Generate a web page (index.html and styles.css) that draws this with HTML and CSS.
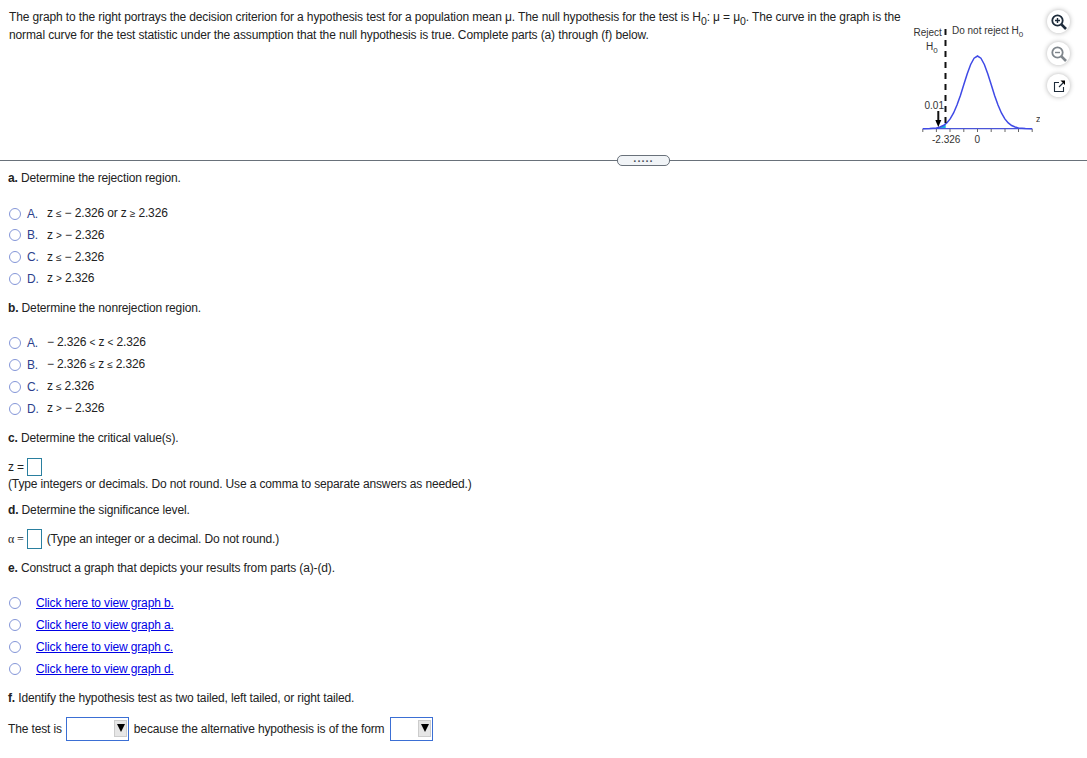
FILE: index.html
```html
<!DOCTYPE html>
<html lang="en">

<head>
    <meta charset="UTF-8">
    <meta name="viewport" content="width=device-width, initial-scale=1.0">
    <title>Hypothesis Test</title>
    <link rel="stylesheet" href="styles.css">
</head>

<body>
    <div class="top">
        <div class="intro">
            <p>The graph to the right portrays the decision criterion for a hypothesis test for a population mean μ. The null hypothesis for the test is H<sub>0</sub>: μ = μ<sub>0</sub>. The curve in the graph is the</p>
            <p>normal curve for the test statistic under the assumption that the null hypothesis is true. Complete parts (a) through (f) below.</p>
        </div>

        <svg class="graph" width="140" height="160" viewBox="0 0 140 160">
            <polygon class="tail" points="22.8,128.7 29.65,128.5 36.49,127.9 39.91,127 43.32,125.5 45.7,123.9 45.7,128.7" />
            <polyline class="axis" points="22.8,128.7 132.2,128.7" />
            <g class="ticks">
                <line x1="22.8" y1="129" x2="22.8" y2="132" />
                <line x1="36.4" y1="129" x2="36.4" y2="132" />
                <line x1="50" y1="129" x2="50" y2="132" />
                <line x1="63.8" y1="129" x2="63.8" y2="132" />
                <line x1="77.5" y1="129" x2="77.5" y2="132" />
                <line x1="91.2" y1="129" x2="91.2" y2="132" />
                <line x1="105" y1="129" x2="105" y2="132" />
                <line x1="118.5" y1="129" x2="118.5" y2="132" />
                <line x1="132.2" y1="129" x2="132.2" y2="132" />
            </g>
            <polyline class="curve" points="22.82,128.7 29.65,128.5 36.49,127.9 39.91,127 43.32,125.5 46.74,122.9 50.16,118.9 53.58,113 57,105.1 60.41,95.4 63.83,84.6 67.25,73.8 70.66,64.5 74.08,58.2 77.5,56 80.92,58.2 84.34,64.5 87.75,73.8 91.17,84.6 94.59,95.4 98,105.1 101.42,113 104.84,118.9 108.26,122.9 111.68,125.5 115.09,127 118.51,127.9 125.35,128.5 132.18,128.7" />
            <line class="cutoff" x1="45.5" y1="29" x2="45.5" y2="128" />
            <line class="arrow-line" x1="38.3" y1="111" x2="38.3" y2="122" />
            <polygon points="35.3,120 41.3,120 38.3,127" />
            <text x="13.5" y="36">Reject</text>
            <text x="52" y="34">Do not reject H<tspan class="sub" dy="3">0</tspan></text>
            <text x="26" y="50">H<tspan class="sub" dy="3">0</tspan></text>
            <text x="24.5" y="109">0.01</text>
            <text x="32" y="143">-2.326</text>
            <text x="74.5" y="143">0</text>
            <text x="136" y="122" class="small">z</text>
        </svg>

        <div class="tools">
            <button class="tool">
                <svg width="18" height="18" viewBox="0 0 18 18">
                    <circle cx="7.5" cy="7.5" r="5.2" class="lens" />
                    <line x1="11.4" y1="11.4" x2="16" y2="16" class="handle-dark" />
                    <path d="M5 7.5h5M7.5 5v5" class="lens-thin" />
                </svg>
            </button>
            <button class="tool">
                <svg width="18" height="18" viewBox="0 0 18 18">
                    <circle cx="7.5" cy="7.5" r="5.2" class="lens off" />
                    <line x1="11.4" y1="11.4" x2="16" y2="16" class="handle-dark off" />
                    <path d="M5 7.5h5" class="lens-thin off" />
                </svg>
            </button>
            <button class="tool">
                <svg width="18" height="18" viewBox="0 0 18 18">
                    <path d="M9 5.5H4.5v9h9V10" class="popout" />
                    <path d="M9 10l4-4" class="popout" />
                    <path d="M10.5 3.5h4.5v4.5z" />
                </svg>
            </button>
        </div>
    </div>

    <div class="divider">
        <div class="rule"></div>
        <div class="grip">.....</div>
        <div class="rule"></div>
    </div>

    <div class="part part-a">
        <p class="head"><b>a.</b> Determine the rejection region.</p>
        <ul class="choices">
            <li><input type="radio"><span class="letter">A.</span><span class="math">z <i>≤</i> − 2.326 or z <i>≥</i> 2.326</span></li>
            <li><input type="radio"><span class="letter">B.</span><span class="math">z <i>&gt;</i> − 2.326</span></li>
            <li><input type="radio"><span class="letter">C.</span><span class="math">z <i>≤</i> − 2.326</span></li>
            <li><input type="radio"><span class="letter">D.</span><span class="math">z <i>&gt;</i> 2.326</span></li>
        </ul>
    </div>

    <div class="part part-b">
        <p class="head"><b>b.</b> Determine the nonrejection region.</p>
        <ul class="choices wide">
            <li><input type="radio"><span class="letter">A.</span><span class="math">− 2.326 <i>&lt;</i> z <i>&lt;</i> 2.326</span></li>
            <li><input type="radio"><span class="letter">B.</span><span class="math">− 2.326 <i>≤</i> z <i>≤</i> 2.326</span></li>
            <li><input type="radio"><span class="letter">C.</span><span class="math">z <i>≤</i> 2.326</span></li>
            <li><input type="radio"><span class="letter">D.</span><span class="math">z <i>&gt;</i> − 2.326</span></li>
        </ul>
    </div>

    <div class="part part-c">
        <p class="head"><b>c.</b> Determine the critical value(s).</p>
        <div class="answer"><span>z =</span><input type="text" class="box"></div>
        <p class="hint">(Type integers or decimals. Do not round. Use a comma to separate answers as needed.)</p>
    </div>

    <div class="part part-d">
        <p class="head"><b>d.</b> Determine the significance level.</p>
        <div class="answer alpha"><span class="greek">α =</span><input type="text" class="box"><span class="after">(Type an integer or a decimal. Do not round.)</span></div>
    </div>

    <div class="part part-e">
        <p class="head"><b>e.</b> Construct a graph that depicts your results from parts (a)-(d).</p>
        <ul class="choices links">
            <li><input type="radio"><a href="#">Click here to view graph b.</a></li>
            <li><input type="radio"><a href="#">Click here to view graph a.</a></li>
            <li><input type="radio"><a href="#">Click here to view graph c.</a></li>
            <li><input type="radio"><a href="#">Click here to view graph d.</a></li>
        </ul>
    </div>

    <div class="part part-f">
        <p class="head"><b>f.</b> Identify the hypothesis test as two tailed, left tailed, or right tailed.</p>
        <div class="sentence">
            <span>The test is</span>
            <div class="select first"><span class="drop"></span></div>
            <span>because the alternative hypothesis is of the form</span>
            <div class="select second"><span class="drop"></span></div>
        </div>
    </div>
</body>

</html>
```

FILE: styles.css
```css
body {
    font-family: "Liberation Sans", Arial, sans-serif;
    font-size: 12px;
    letter-spacing: -0.14px;
    line-height: 18px;
    color: #222;
    background-color: #fff;
    margin: 0;
    padding: 0;
}

p {
    margin: 0;
}

sub {
    font-size: 10.5px;
    line-height: 0;
    vertical-align: -4px;
}

.top {
    display: flex;
    height: 155px;
}

.intro {
    width: 897px;
    margin: 8px 0 0 9px;
    flex: none;
    letter-spacing: -0.125px;
    white-space: nowrap;
}

.graph {
    flex: none;
    margin-left: -6px;
}

.graph text {
    font-family: "Liberation Sans", Arial, sans-serif;
    font-size: 10px;
    letter-spacing: 0;
    fill: #333;
}

.graph text.small {
    font-size: 9px;
}

.graph .sub {
    font-size: 8px;
}

.tail {
    fill: #19b5d8;
}

.axis {
    stroke: #4a55d8;
    stroke-width: 1.2;
    fill: none;
}

.ticks line {
    stroke: #666;
    stroke-width: 1;
}

.curve {
    stroke: #3f4ae6;
    stroke-width: 1.5;
    fill: none;
}

.cutoff {
    stroke: #111;
    stroke-width: 2;
    stroke-dasharray: 6 5;
}

.arrow-line {
    stroke: #111;
    stroke-width: 2;
}

.tools {
    display: flex;
    flex-direction: column;
    gap: 9px;
    margin: 10px 0 0 7px;
}

.tool {
    width: 23px;
    height: 23px;
    padding: 0;
    border: 0;
    border-radius: 50%;
    background: #fff;
    box-shadow: 0 0 5px rgba(0, 0, 0, 0.3);
    display: flex;
    align-items: center;
    justify-content: center;
}

.lens {
    fill: none;
    stroke: #1d2b3a;
    stroke-width: 1.8;
}

.lens-thin {
    fill: none;
    stroke: #1d2b3a;
    stroke-width: 1.4;
}

.handle-dark {
    stroke: #1d2b3a;
    stroke-width: 2.6;
}

.lens.off,
.lens-thin.off,
.handle-dark.off {
    stroke: #7f868c;
}

.popout {
    fill: none;
    stroke: #1d2b3a;
    stroke-width: 1.1;
}

.divider {
    display: flex;
    align-items: center;
    height: 11px;
}

.rule {
    flex: 1;
    height: 1px;
    background-color: #69717a;
}

.grip {
    width: 51px;
    height: 9px;
    border: 1px solid #69717a;
    border-radius: 5px;
    background-color: #f1f4f7;
    color: #4a525a;
    font-size: 11px;
    font-weight: bold;
    line-height: 4px;
    letter-spacing: 1px;
    text-align: center;
}

.divider .rule:first-child {
    flex: none;
    width: 617px;
}

.part {
    padding-left: 8px;
}

.head b {
    font-weight: bold;
}

.part-a {
    padding-top: 3px;
}

.part-b {
    padding-top: 9px;
}

.part-c {
    padding-top: 9px;
}

.part-d {
    padding-top: 8px;
}

.part-e {
    padding-top: 10px;
}

.part-f {
    padding-top: 9px;
}

.choices {
    list-style: none;
    margin: 16px 0 0;
    padding: 0;
}

.choices li {
    display: flex;
    align-items: center;
    height: 21.67px;
}

.wide {
    margin-top: 15px;
}

.wide li {
    height: 22px;
}

.choices input {
    appearance: none;
    flex: none;
    width: 12px;
    height: 12px;
    margin: 0 6px 0 1px;
    border: 1.5px solid #8496d8;
    border-radius: 50%;
    background: #fff;
}

.letter {
    width: 20px;
    color: #2b3f8c;
}

.math i {
    font-style: normal;
    font-size: 10px;
}

.links {
    margin-top: 15px;
}

.links li {
    height: 22px;
}

.links input {
    margin-right: 15px;
}

.links a {
    color: #0000e6;
}

.answer {
    display: flex;
    align-items: center;
    margin-top: 11px;
    height: 18px;
}

.box {
    box-sizing: border-box;
    width: 15px;
    height: 18px;
    margin-left: 3px;
    padding: 0;
    border: 1px solid #2a7f9f;
    background: #fff;
}

.hint {
    margin-top: -1px;
}

.alpha {
    margin-top: 10px;
    height: 20px;
}

.alpha .box {
    height: 20px;
}

.greek {
    font-family: "Liberation Serif", serif;
}

.after {
    margin-left: 5px;
}

.sentence {
    display: flex;
    align-items: center;
    gap: 4.5px;
    margin-top: 10px;
    height: 24px;
}

.select {
    box-sizing: border-box;
    height: 24px;
    border: 1px solid #3b6fd4;
    background: #fff;
    display: flex;
    justify-content: flex-end;
    align-items: flex-start;
    padding: 2px 1px 0 0;
}

.select.first {
    width: 63px;
}

.select.second {
    width: 43px;
    margin-left: 1px;
}

.drop {
    position: relative;
    width: 13px;
    height: 17px;
    background-color: #e6e6e6;
    border: 1px solid #ccc;
    box-sizing: border-box;
}

.drop::after {
    content: "";
    position: absolute;
    left: 2px;
    top: 3px;
    border-left: 4px solid transparent;
    border-right: 4px solid transparent;
    border-top: 8px solid #000;
}
```
